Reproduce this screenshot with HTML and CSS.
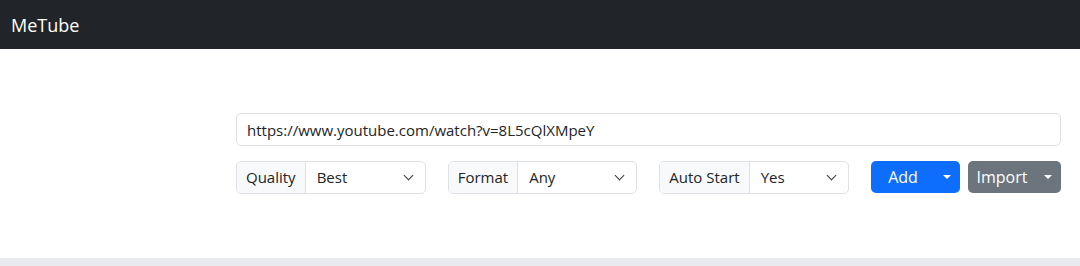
FILE: index.html
```html
<html lang="en">
<head>
    <meta charset="UTF-8">
    <meta name="viewport" content="width=device-width, initial-scale=1.0">
    <title>MeTube</title>
    <link rel="stylesheet" href="styles.css">
</head>
<body>

    <div class="navbar">
        <span class="brand">MeTube</span>
    </div>

    <div class="main">
        <div class="form">
            <input class="urlInput" type="text" value="https://www.youtube.com/watch?v=8L5cQlXMpeY">
            <div class="controls">
                <div class="group">
                    <span class="groupLabel">Quality</span>
                    <div class="select">Best<span class="chevron"></span></div>
                </div>
                <div class="group">
                    <span class="groupLabel">Format</span>
                    <div class="select">Any<span class="chevron"></span></div>
                </div>
                <div class="group">
                    <span class="groupLabel">Auto Start</span>
                    <div class="select">Yes<span class="chevron"></span></div>
                </div>
                <div class="btns">
                    <div class="splitBtn primary">
                        <span class="btnMain">Add</span>
                        <span class="btnToggle"><span class="caret"></span></span>
                    </div>
                    <div class="splitBtn secondary">
                        <span class="btnMain">Import</span>
                        <span class="btnToggle"><span class="caret"></span></span>
                    </div>
                </div>
            </div>
        </div>
    </div>

    <div class="footer"></div>

</body>
</html>
```

FILE: styles.css
```css
body{
    margin: 0;
    font-family: "Open Sans", "Noto Sans", sans-serif;
    font-size: 15px;
    color: #212529;
    background-color: white;
}

.navbar{
    height: 49px;
    background-color: #212529;
    padding: 0 11px;
    display: flex;
    align-items: center;
}

.brand{
    color: white;
    font-size: 18px;
}

.main{
    height: 209px;
    box-sizing: border-box;
    padding-top: 64px;
    padding-left: 236px;
}

.form{
    width: 825px;
}

.urlInput{
    box-sizing: border-box;
    width: 100%;
    height: 33px;
    border: 1px solid #dee2e6;
    border-radius: 5px;
    padding: 0 10px;
    font-family: inherit;
    font-size: 15px;
    color: #212529;
    display: block;
}

.controls{
    margin-top: 15px;
    display: flex;
    gap: 22px;
}

.group{
    box-sizing: border-box;
    width: 190px;
    height: 33px;
    display: flex;
    border: 1px solid #dee2e6;
    border-radius: 5px;
}

.groupLabel{
    background-color: #f8f9fa;
    border-right: 1px solid #dee2e6;
    border-radius: 4px 0 0 4px;
    padding: 0 9px 1px 9px;
    display: flex;
    align-items: center;
}

.select{
    flex: 1;
    padding: 0 11px 1px 11px;
    display: flex;
    align-items: center;
    justify-content: space-between;
}

.chevron{
    width: 6px;
    height: 6px;
    border-right: 1.5px solid #343a40;
    border-bottom: 1.5px solid #343a40;
    transform: rotate(45deg);
    margin-right: 2px;
    margin-top: -3px;
}

.btns{
    display: flex;
    gap: 8px;
}

.splitBtn{
    height: 32px;
    display: flex;
    border-radius: 5px;
    color: white;
    font-size: 16px;
}

.primary{
    background-color: #0d6efd;
    width: 89px;
}

.secondary{
    background-color: #6c757d;
    width: 93px;
}

.btnMain{
    flex: 1;
    display: flex;
    align-items: center;
    justify-content: center;
    padding-left: 2px;
}

.btnToggle{
    width: 27px;
    display: flex;
    align-items: center;
    justify-content: center;
}

.caret{
    width: 0;
    height: 0;
    border-top: 4px solid white;
    border-left: 4px solid transparent;
    border-right: 4px solid transparent;
}

.footer{
    height: 8px;
    background-color: #e9eaed;
}
```
